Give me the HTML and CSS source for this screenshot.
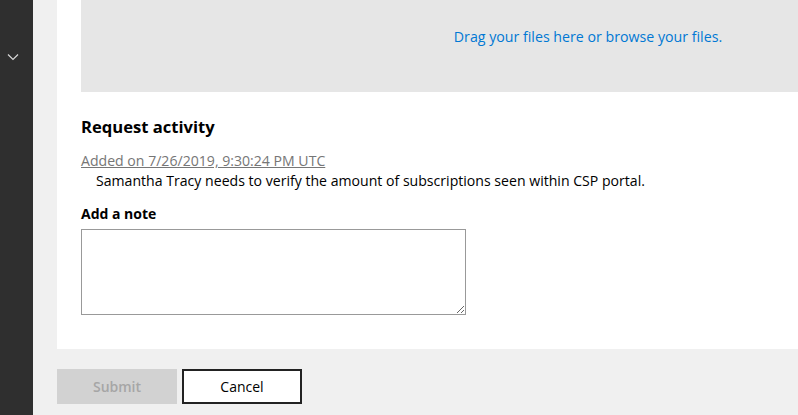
FILE: index.html
```html
<!DOCTYPE html>
<html>
<head>
<meta charset="utf-8">
<link rel="stylesheet" href="styles.css">
</head>
<body>
<div class="app">
  <nav class="sidebar">
    <svg class="chev" width="12" height="8" viewBox="0 0 12 8"><polyline points="1,1.5 6,6.5 11,1.5" fill="none" stroke="#d8d8d8" stroke-width="1.2"/></svg>
  </nav>
  <main class="main">
    <section class="panel">
      <div class="dropzone"><span class="droplink">Drag your files here or browse your files.</span></div>
      <h2 class="heading">Request activity</h2>
      <a class="added">Added on 7/26/2019, 9:30:24 PM UTC</a>
      <p class="note-text">Samantha Tracy needs to verify the amount of subscriptions seen within CSP portal.</p>
      <label class="label">Add a note</label>
      <textarea class="notebox"></textarea>
    </section>
    <div class="actions">
      <button class="btn btn-submit" disabled>Submit</button>
      <button class="btn btn-cancel">Cancel</button>
    </div>
  </main>
</div>
</body>
</html>
```
FILE: styles.css
```css
html, body {
  margin: 0;
  padding: 0;
  height: 415px;
  overflow: hidden;
  font-family: "Open Sans", "Noto Sans", sans-serif;
}
.app {
  display: flex;
  height: 415px;
  width: 798px;
  overflow: hidden;
}
.sidebar {
  width: 33px;
  flex: none;
  background: #2f2f2f;
  display: flex;
  justify-content: center;
  align-items: flex-start;
  padding-top: 53px;
  box-sizing: border-box;
}
.chev { display: block; margin-left: -8px; }
.main {
  flex: 1;
  background: #f0f0f0;
  padding-left: 24px;
  min-width: 0;
}
.panel {
  background: #fff;
  width: 1100px;
  height: 349px;
  padding-left: 24px;
  box-sizing: border-box;
  display: flex;
  flex-direction: column;
  align-items: flex-start;
}
.dropzone {
  width: 1014px;
  height: 92px;
  background: #e6e6e6;
  display: flex;
  justify-content: center;
  padding-top: 27px;
  box-sizing: border-box;
}
.droplink {
  color: #0078d4;
  font-size: 14.2px;
  line-height: 20px;
}
.heading {
  margin: 24px 0 0;
  font-size: 16.6px;
  font-weight: 700;
  line-height: 22px;
  color: #000;
}
.added {
  margin-top: 13px;
  font-size: 14.1px;
  line-height: 19px;
  color: #767676;
  text-decoration: underline;
}
.note-text {
  margin: 1px 0 0 15px;
  font-size: 14.1px;
  line-height: 19px;
  color: #000;
}
.label {
  margin-top: 15px;
  font-size: 14px;
  font-weight: 700;
  line-height: 18px;
  color: #000;
}
.notebox {
  margin-top: 6px;
  width: 385px;
  height: 86px;
  box-sizing: border-box;
  border: 1px solid #999;
  resize: both;
  padding: 4px;
  font-family: inherit;
}
.actions {
  display: flex;
  gap: 5px;
  margin-top: 20px;
}
.btn {
  width: 120px;
  height: 35px;
  box-sizing: border-box;
  font-family: inherit;
  font-size: 14px;
  padding: 0;
}
.btn-submit {
  background: #d2d2d2;
  color: #a6a6a6;
  border: none;
  font-weight: 600;
}
.btn-cancel {
  background: #fff;
  color: #000;
  border: 2px solid #222;
}
```
